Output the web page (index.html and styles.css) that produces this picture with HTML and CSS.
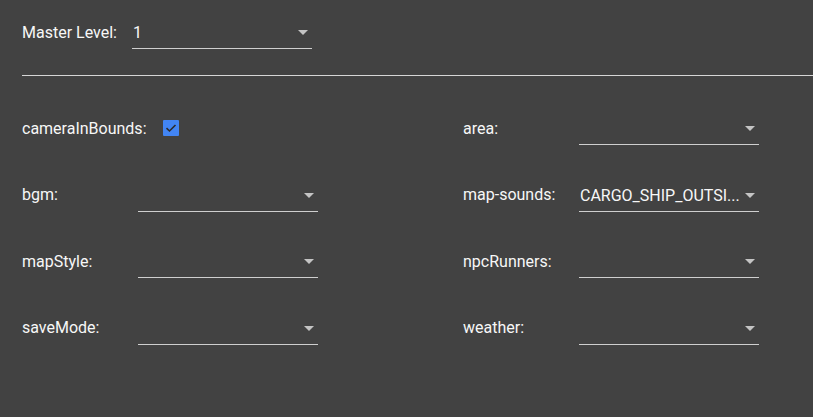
FILE: index.html
```html
<!DOCTYPE html>
<html>
<head>
<meta charset="utf-8">
<link rel="stylesheet" href="styles.css">
</head>
<body>
<div class="page">
  <div class="header">
    <span class="label-plain">Master Level:</span>
    <div class="select"><span class="value">1</span><svg class="arrow" width="10" height="5" viewBox="0 0 10 5"><path d="M0 0H10L5 5Z"/></svg></div>
  </div>
  <div class="rule"></div>
  <div class="grid">
    <div class="field">
      <span class="label">cameraInBounds:</span>
      <span class="checkbox"><svg width="16" height="16" viewBox="0 0 16 16"><path d="M3.5 8.2L6.5 11L12.5 5" fill="none" stroke="#2b2b2b" stroke-width="1.6"/></svg></span>
    </div>
    <div class="field">
      <span class="label">area:</span>
      <div class="select"><span class="value"></span><svg class="arrow" width="10" height="5" viewBox="0 0 10 5"><path d="M0 0H10L5 5Z"/></svg></div>
    </div>
    <div class="field">
      <span class="label">bgm:</span>
      <div class="select"><span class="value"></span><svg class="arrow" width="10" height="5" viewBox="0 0 10 5"><path d="M0 0H10L5 5Z"/></svg></div>
    </div>
    <div class="field">
      <span class="label">map-sounds:</span>
      <div class="select"><span class="value">CARGO_SHIP_OUTSI...</span><svg class="arrow" width="10" height="5" viewBox="0 0 10 5"><path d="M0 0H10L5 5Z"/></svg></div>
    </div>
    <div class="field">
      <span class="label">mapStyle:</span>
      <div class="select"><span class="value"></span><svg class="arrow" width="10" height="5" viewBox="0 0 10 5"><path d="M0 0H10L5 5Z"/></svg></div>
    </div>
    <div class="field">
      <span class="label">npcRunners:</span>
      <div class="select"><span class="value"></span><svg class="arrow" width="10" height="5" viewBox="0 0 10 5"><path d="M0 0H10L5 5Z"/></svg></div>
    </div>
    <div class="field">
      <span class="label">saveMode:</span>
      <div class="select"><span class="value"></span><svg class="arrow" width="10" height="5" viewBox="0 0 10 5"><path d="M0 0H10L5 5Z"/></svg></div>
    </div>
    <div class="field">
      <span class="label">weather:</span>
      <div class="select"><span class="value"></span><svg class="arrow" width="10" height="5" viewBox="0 0 10 5"><path d="M0 0H10L5 5Z"/></svg></div>
    </div>
  </div>
</div>
</body>
</html>
```
FILE: styles.css
```css
html, body {
  margin: 0;
  padding: 0;
  background: #424242;
  height: 100%;
}
.page {
  font-family: Roboto, "Liberation Sans", sans-serif;
  font-size: 16px;
  color: #f7f7f7;
  padding: 17px 0 0 22px;
}
.header {
  display: flex;
  align-items: center;
  gap: 15px;
  height: 32px;
}
.label-plain {
  margin-bottom: 2px;
}
.select {
  width: 180px;
  height: 32px;
  box-sizing: border-box;
  border-bottom: 1px solid #cfcfcf;
  display: flex;
  align-items: center;
  padding: 0 4px 0 1px;
  gap: 4px;
}
.value {
  flex: 1;
  min-width: 0;
  white-space: nowrap;
  overflow: hidden;
}
.arrow {
  fill: #c4c4c4;
  flex: none;
}
.rule {
  margin-top: 26px;
  height: 1px;
  background: #d6d6d6;
}
.grid {
  margin-top: 37px;
  display: grid;
  grid-template-columns: 441px 1fr;
  row-gap: 34.67px;
}
.field {
  display: flex;
  align-items: center;
  gap: 16px;
  height: 32px;
}
.label {
  min-width: 100px;
  margin-bottom: 2px;
}
.checkbox {
  width: 16px;
  height: 16px;
  background: #4285f4;
  border-radius: 1px;
  display: block;
  margin-top: -2px;
}
.checkbox svg {
  display: block;
}
```
